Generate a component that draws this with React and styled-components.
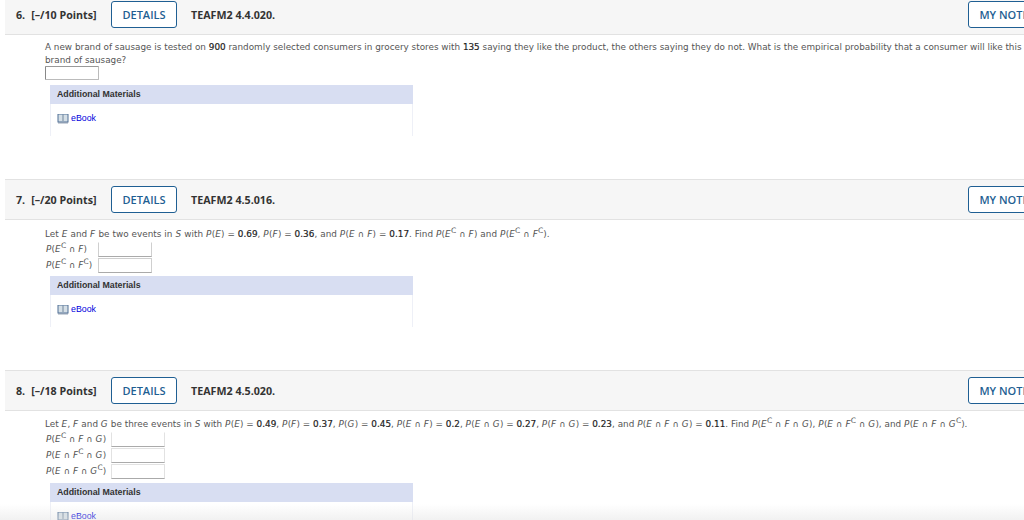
import styled, { createGlobalStyle } from 'styled-components';

const GlobalStyle = createGlobalStyle`
  html, body {
    margin: 0;
    padding: 0;
    background: #fff;
    overflow: hidden;
  }
`

const Page = styled.div`
  position: relative;
  width: 1024px;
  height: 520px;
  overflow: hidden;
  background: #fff;
`
const Questions = styled.div`
  width: 1080px;
  margin-top: -6px;
  margin-left: 5px;
  display: flex;
  flex-direction: column;
  gap: 43px;
`
const Question = styled.section`
  flex: none;
`
const Header = styled.header`
  height: 41px;
  box-sizing: border-box;
  background: #f6f6f6;
  border-top: 1px solid #e2e2e2;
  border-bottom: 1px solid #e2e2e2;
  display: flex;
  align-items: center;
  padding-left: 11px;
  font-family: "Open Sans", sans-serif;
  font-weight: 700;
  font-size: 10.7px;
  color: #333;
`
const Points = styled.span`
  width: 95px;
  flex: none;
  display: flex;
  gap: 6px;
`
const OutlineButton = styled.button`
  height: 27px;
  box-sizing: border-box;
  background: #fff;
  border: 1px solid #1f5f93;
  border-radius: 3px;
  color: #1f5f93;
  font-family: "Open Sans", sans-serif;
  font-weight: 600;
  font-size: 11px;
  padding: 0;
  width: ${props => props.$wide ? '78px' : '66px'};
  margin-left: ${props => props.$wide ? 'auto' : '0'};
  margin-right: ${props => props.$wide ? '39px' : '0'};
  flex: none;
`
const Code = styled.span`
  margin-left: 14px;
`
const Body = styled.div`
  padding-left: 40px;
  width: 979px;
  font-family: "DejaVu Sans", sans-serif;
  font-size: 8.83px;
  line-height: 13px;
  color: #555;
`
const Prompt = styled.div`
  padding-top: ${props => props.$top}px;
  letter-spacing: ${props => props.$tracking || 0}px;
`
const Num = styled.span`
  color: #222;
  -webkit-text-stroke: 0.2px #222;
`
const Var = styled.i`
  color: #555;
  margin-right: 0.3px;
`
const Sup = styled.sup`
  font-size: 7.5px;
  line-height: 0;
  font-style: normal;
`
const Rows = styled.div`
  display: grid;
  grid-template-columns: ${props => props.$label}px 54px;
  grid-auto-rows: 16px;
  align-items: center;
  margin-left: 1px;
`
const RowLabel = styled.span`
  font-size: 8.8px;
  white-space: nowrap;
`
const Answer = styled.div`
  height: 15px;
  box-sizing: border-box;
  background: #fff;
  border: 1px solid ${props => props.$light ? '#e2e2e2' : '#cfcfcf'};
  border-top-color: ${props => props.$open ? 'transparent' : props.$light ? '#e2e2e2' : '#cfcfcf'};
  border-bottom-color: #aaa;
`
const LoneAnswer = styled.div`
  width: 54px;
  height: 14px;
  box-sizing: border-box;
  background: #fff;
  border: 1px solid #bbb;
  border-top-color: #999;
  border-left-color: #888;
  border-radius: 1px;
  margin-top: -1px;
`
const Materials = styled.div`
  width: 363px;
  margin-left: 5px;
  margin-top: ${props => props.$top}px;
  box-sizing: border-box;
  border: 1px solid #eef0f7;
  border-top: 0;
  border-bottom: 0;
  height: 51px;
  background: #fff;
`
const MaterialsTitle = styled.div`
  height: 19px;
  background: #d8def2;
  padding-left: 7px;
  margin: 0 -1px;
  font-family: "Liberation Sans", sans-serif;
  font-weight: 700;
  font-size: 8.8px;
  line-height: 18px;
  color: #333;
`
const MaterialLink = styled.a`
  display: flex;
  align-items: center;
  gap: 2px;
  padding: 8px 0 0 6px;
  font-family: "Liberation Sans", sans-serif;
  font-size: 8.8px;
  line-height: 12px;
  color: #0000dd;
`
const BottomFade = styled.div`
  position: absolute;
  left: 0;
  bottom: 0;
  width: 1024px;
  height: 16px;
  background: linear-gradient(to bottom, rgba(235,235,235,0), rgba(225,225,225,0.45));
  pointer-events: none;
`

function BookIcon() {
  return (
    <svg width="12" height="11" viewBox="0 0 12 11">
      <rect x="0.5" y="1" width="11" height="8.5" fill="#4f6f96" />
      <path d="M1.5 1.5h4l.5 .6.5-.6h4v7h-4l-.5 .5-.5-.5h-4z" fill="#d5dfe6" />
      <path d="M6 2v6.5" stroke="#59708c" strokeWidth="0.8" />
      <rect x="1" y="9.4" width="10" height="1" fill="#7d8fa6" />
    </svg>
  )
}

function AdditionalMaterials({ top }) {
  return (
    <Materials $top={top}>
      <MaterialsTitle>Additional Materials</MaterialsTitle>
      <MaterialLink><BookIcon />eBook</MaterialLink>
    </Materials>
  )
}

function QuestionHeader({ number, points, code }) {
  return (
    <Header>
      <Points><span>{number}</span><span>{points}</span></Points>
      <OutlineButton>DETAILS</OutlineButton>
      <Code>{code}</Code>
      <OutlineButton $wide>MY NOTES</OutlineButton>
    </Header>
  )
}

function App() {
  return (
    <Page>
      <GlobalStyle />
      <Questions>
        <Question>
          <QuestionHeader number="6." points="[–/10 Points]" code="TEAFM2 4.4.020." />
          <Body>
            <Prompt $top={6}>
              A new brand of sausage is tested on <Num>900</Num> randomly selected consumers in grocery stores with <Num>135</Num> saying they like the product, the others saying they do not. What is the empirical probability that a consumer will like this brand of sausage?
            </Prompt>
            <LoneAnswer />
            <AdditionalMaterials top={5} />
          </Body>
        </Question>

        <Question>
          <QuestionHeader number="7." points="[–/20 Points]" code="TEAFM2 4.5.016." />
          <Body>
            <Prompt $top={8} $tracking={0.05}>
              Let <Var>E</Var> and <Var>F</Var> be two events in <Var>S</Var> with <Var>P</Var>(<Var>E</Var>) = <Num>0.69</Num>, <Var>P</Var>(<Var>F</Var>) = <Num>0.36</Num>, and <Var>P</Var>(<Var>E</Var> ∩ <Var>F</Var>) = <Num>0.17</Num>. Find <Var>P</Var>(<Var>E</Var><Sup>C</Sup> ∩ <Var>F</Var>) and <Var>P</Var>(<Var>E</Var><Sup>C</Sup> ∩ <Var>F</Var><Sup>C</Sup>).
            </Prompt>
            <Rows $label={52}>
              <RowLabel><Var>P</Var>(<Var>E</Var><Sup>C</Sup> ∩ <Var>F</Var>)</RowLabel>
              <Answer $open />
              <RowLabel><Var>P</Var>(<Var>E</Var><Sup>C</Sup> ∩ <Var>F</Var><Sup>C</Sup>)</RowLabel>
              <Answer />
            </Rows>
            <AdditionalMaterials top={3} />
          </Body>
        </Question>

        <Question>
          <QuestionHeader number="8." points="[–/18 Points]" code="TEAFM2 4.5.020." />
          <Body>
            <Prompt $top={7} $tracking={0.02}>
              Let <Var>E</Var>, <Var>F</Var> and <Var>G</Var> be three events in <Var>S</Var> with <Var>P</Var>(<Var>E</Var>) = <Num>0.49</Num>, <Var>P</Var>(<Var>F</Var>) = <Num>0.37</Num>, <Var>P</Var>(<Var>G</Var>) = <Num>0.45</Num>, <Var>P</Var>(<Var>E</Var> ∩ <Var>F</Var>) = <Num>0.2</Num>, <Var>P</Var>(<Var>E</Var> ∩ <Var>G</Var>) = <Num>0.27</Num>, <Var>P</Var>(<Var>F</Var> ∩ <Var>G</Var>) = <Num>0.23</Num>, and <Var>P</Var>(<Var>E</Var> ∩ <Var>F</Var> ∩ <Var>G</Var>) = <Num>0.11</Num>. Find <Var>P</Var>(<Var>E</Var><Sup>C</Sup> ∩ <Var>F</Var> ∩ <Var>G</Var>), <Var>P</Var>(<Var>E</Var> ∩ <Var>F</Var><Sup>C</Sup> ∩ <Var>G</Var>), and <Var>P</Var>(<Var>E</Var> ∩ <Var>F</Var> ∩ <Var>G</Var><Sup>C</Sup>).
            </Prompt>
            <Rows $label={65}>
              <RowLabel><Var>P</Var>(<Var>E</Var><Sup>C</Sup> ∩ <Var>F</Var> ∩ <Var>G</Var>)</RowLabel>
              <Answer $light $open />
              <RowLabel><Var>P</Var>(<Var>E</Var> ∩ <Var>F</Var><Sup>C</Sup> ∩ <Var>G</Var>)</RowLabel>
              <Answer $light />
              <RowLabel><Var>P</Var>(<Var>E</Var> ∩ <Var>F</Var> ∩ <Var>G</Var><Sup>C</Sup>)</RowLabel>
              <Answer $light />
            </Rows>
            <AdditionalMaterials top={4} />
          </Body>
        </Question>
      </Questions>
      <BottomFade />
    </Page>
  )
}

export default App
